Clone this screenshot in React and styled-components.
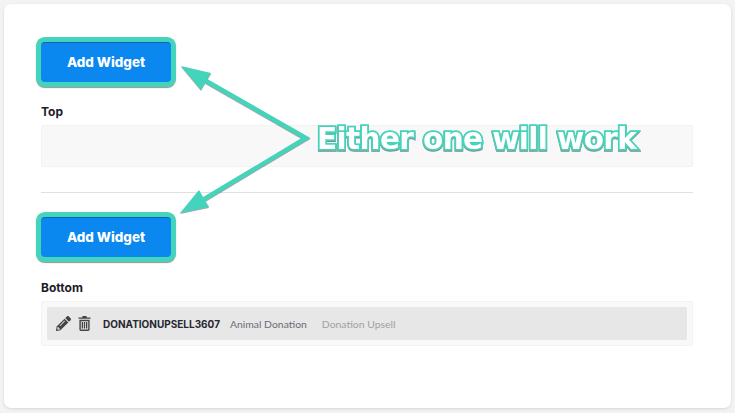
import React from "react";
import styled, { createGlobalStyle } from "styled-components";
import { FaPencilAlt } from "react-icons/fa";

const teal = "#44d3bb";

const GlobalStyle = createGlobalStyle`
  html, body {
    margin: 0;
    padding: 0;
    background: #f3f3f3;
    font-family: "Inter", "Liberation Sans", sans-serif;
  }
`;

const Card = styled.main`
  position: relative;
  box-sizing: border-box;
  width: 727px;
  height: 404px;
  margin: 4px;
  padding: 38px 38px 0 37px;
  background: #fff;
  border-radius: 7px;
  box-shadow: 0 1px 3px rgba(0, 0, 0, 0.12);
`;

const AddButton = styled.button`
  display: block;
  width: 130px;
  height: 40px;
  padding: 0 0 2px;
  border: 0;
  border-top: 1px solid #0b62b0;
  border-radius: 4px;
  background: #0a88f0;
  color: #fff;
  font-family: "Inter", "Liberation Sans", sans-serif;
  font-size: 13.4px;
  font-weight: 800;
  box-shadow: 0 0 0 5px ${teal}, 0 1px 1px 5px rgba(60, 60, 60, 0.55);
`;

const SectionLabel = styled.h3`
  margin: ${(p) => p.$top}px 0 6px;
  color: #1c1c28;
  font-size: 12px;
  line-height: 15px;
  font-weight: 700;
`;

const EmptyZone = styled.div`
  box-sizing: border-box;
  height: 42px;
  background: #f8f8f8;
  border: 1px solid #f2f2f2;
  border-radius: 2px;
`;

const Divider = styled.hr`
  margin: 25px 0 24px;
  border: 0;
  border-top: 1px solid #e0e0e0;
`;

const WidgetZone = styled.div`
  box-sizing: border-box;
  height: 45px;
  padding: 5px;
  background: #f9f9f9;
  border: 1px solid #f2f2f2;
  border-radius: 2px;
`;

const WidgetRow = styled.div`
  display: flex;
  align-items: center;
  height: 33px;
  padding-left: 9px;
  background: #e7e7e7;
  border-radius: 2px;
`;

const IconGroup = styled.div`
  display: flex;
  align-items: center;
  gap: 7px;
  width: 47px;
  color: #444;
`;

const WidgetCode = styled.span`
  margin-right: 10px;
  color: #26262e;
  font-size: 10px;
  font-weight: 700;
`;

const WidgetName = styled.span`
  margin-right: 15px;
  color: ${(p) => p.$color};
  font-family: "Lato", "Liberation Sans", sans-serif;
  font-size: 10.4px;
`;

const Arrows = styled.svg`
  position: absolute;
  left: -4px;
  top: -4px;
  pointer-events: none;
  filter: drop-shadow(0 1px 0.5px rgba(60, 60, 60, 0.45));
`;

const Callout = styled.div`
  position: absolute;
  left: 313px;
  top: 118px;
  color: #fff;
  font-family: "DejaVu Sans", sans-serif;
  font-size: 29.5px;
  line-height: 34px;
  font-weight: 700;
  letter-spacing: -0.6px;
  white-space: nowrap;
  -webkit-text-stroke: 3.5px ${teal};
  paint-order: stroke fill;
  filter: drop-shadow(0 1px 0.5px rgba(60, 60, 60, 0.6));
`;

const TrashIcon = () => (
  <svg width="13" height="15" viewBox="0 0 14 16" fill="currentColor">
    <path d="M5 0h4l.6 1.5H13.5V3H.5V1.5h3.9z" />
    <path
      fillRule="evenodd"
      d="M1.5 4h11v10.4c0 .9-.7 1.6-1.6 1.6H3.1c-.9 0-1.6-.7-1.6-1.6zM3 5.5v9h8v-9z"
    />
    <path d="M4 6.5h1.4v7H4zM6.3 6.5h1.4v7H6.3zM8.6 6.5H10v7H8.6z" />
  </svg>
);

const App = () => {
  return (
    <>
      <GlobalStyle />
      <Card>
        <AddButton>Add Widget</AddButton>
        <SectionLabel $top={22}>Top</SectionLabel>
        <EmptyZone />
        <Divider />
        <AddButton>Add Widget</AddButton>
        <SectionLabel $top={23}>Bottom</SectionLabel>
        <WidgetZone>
          <WidgetRow>
            <IconGroup>
              <FaPencilAlt size={15} />
              <TrashIcon />
            </IconGroup>
            <WidgetCode>DONATIONUPSELL3607</WidgetCode>
            <WidgetName $color="#6b6b75">Animal Donation</WidgetName>
            <WidgetName $color="#a0a0a6">Donation Upsell</WidgetName>
          </WidgetRow>
        </WidgetZone>
        <Arrows width="735" height="413" viewBox="0 0 735 413">
          <polyline
            points="201,78 306,138 201,201"
            fill="none"
            stroke={teal}
            strokeWidth="4.5"
            strokeLinejoin="miter"
          />
          <polygon points="181,66 211,73 201,90" fill={teal} />
          <polygon points="180,213 199,190 209,207" fill={teal} />
        </Arrows>
        <Callout>Either one will work</Callout>
      </Card>
    </>
  );
};

export default App;
